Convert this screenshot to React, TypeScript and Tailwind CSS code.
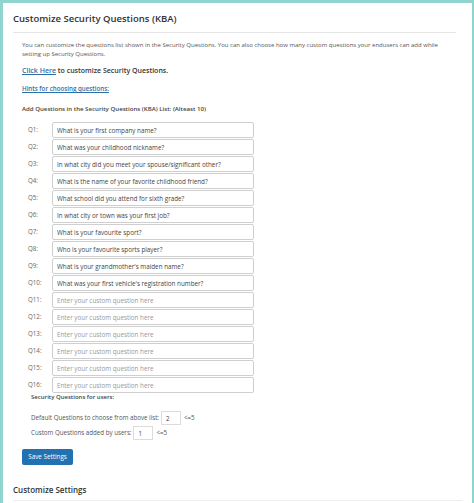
const questions = [
  'What is your first company name?',
  'What was your childhood nickname?',
  'In what city did you meet your spouse/significant other?',
  'What is the name of your favorite childhood friend?',
  'What school did you attend for sixth grade?',
  'In what city or town was your first job?',
  'What is your favourite sport?',
  'Who is your favourite sports player?',
  "What is your grandmother's maiden name?",
  "What was your first vehicle's registration number?",
];

const font = { fontFamily: '"Open Sans", "Noto Sans", sans-serif' };

export default function App() {
  const rows = Array.from({ length: 16 }, (_, i) => ({
    label: `Q${i + 1}:`,
    value: questions[i] ?? '',
  }));

  return (
    <div className="w-[474px] h-[503px] overflow-hidden bg-[#8fd4ce] pl-[3px] pt-[3px] pr-[2px]" style={font}>
      <div className="bg-white h-full">
        {/* Header */}
        <div className="px-[10px] pt-[9px]">
          <h2 className="text-[9.5px] leading-[14px] font-semibold text-[#333]">
            Customize Security Questions (KBA)
          </h2>
          <div className="mt-[6px] border-b border-[#e5e5e5] mr-[6px]" />
        </div>

        {/* Body */}
        <div className="pl-[19px] pr-[20px] pt-[8px]">
          <p className="text-[6px] leading-[9px] text-[#555]">
            You can customize the questions list shown in the Security Questions. You can also choose how many custom questions your endusers can add while setting up Security Questions.
          </p>
          <p className="mt-[6px] text-[7px] leading-[12px] font-semibold text-[#333]">
            <a className="text-[#2f6fa8] underline">Click Here</a> to customize Security Questions.
          </p>
          <p className="mt-[7px] text-[6.2px] leading-[10px] font-semibold">
            <a className="text-[#2f6fa8] underline">Hints for choosing questions:</a>
          </p>
          <p className="mt-[10px] text-[6.1px] leading-[10px] font-semibold text-[#444]">
            Add Questions in the Security Questions (KBA) List: (Alteast 10)
          </p>

          <div className="mt-[8px] flex flex-col gap-[1px]">
            {rows.map((r) => (
              <div key={r.label} className="flex items-center h-[16px]">
                <span className="w-[30px] pl-[6px] text-[6.2px] text-[#666]">{r.label}</span>
                <input
                  readOnly
                  value={r.value}
                  placeholder="Enter your custom question here"
                  className="w-[202px] h-[16px] border border-[#cfcfcf] rounded-[2px] px-[4px] text-[6.3px] text-[#444] placeholder:text-[#999] outline-none"
                />
              </div>
            ))}
          </div>

          {/* Users settings */}
          <div className="pl-[9px]">
            <p className="text-[6px] leading-[9px] font-semibold text-[#444]">
              Security Questions for users:
            </p>
            <div className="mt-[9px] flex items-center h-[14px] text-[6.2px] text-[#555]">
              <span>Default Questions to choose from above list:</span>
              <input
                readOnly
                value="2"
                className="ml-[2px] w-[20px] h-[14px] border border-[#dcdcdc] px-[4px] text-[6.3px] text-[#444] outline-none"
              />
              <span className="ml-[3px]">&lt;=5</span>
            </div>
            <div className="mt-[1px] flex items-center h-[14px] text-[6.2px] text-[#555]">
              <span>Custom Questions added by users:</span>
              <input
                readOnly
                value="1"
                className="ml-[2px] w-[20px] h-[14px] border border-[#dcdcdc] px-[4px] text-[6.3px] text-[#444] outline-none"
              />
              <span className="ml-[3px]">&lt;=5</span>
            </div>
          </div>

          <button className="mt-[9px] w-[51px] h-[16px] bg-[#2271b1] rounded-[2px] text-white text-[6.3px] leading-[16px]">
            Save Settings
          </button>
        </div>

        <div className="px-[10px] pt-[18px]">
          <h2 className="text-[8px] leading-[14px] font-semibold text-[#333]">Customize Settings</h2>
          <div className="mt-[3px] border-b border-[#eee]" />
        </div>
      </div>
    </div>
  );
}
